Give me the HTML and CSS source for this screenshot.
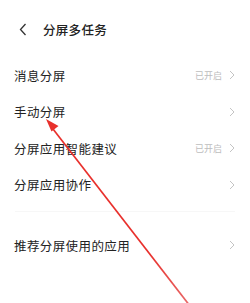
FILE: index.html
```html
<!DOCTYPE html>
<html lang="zh">
<head>
<meta charset="utf-8">
<link rel="stylesheet" href="styles.css">
</head>
<body>
<div class="page">
  <header class="topbar">
    <svg class="back" width="8" height="13" viewBox="0 0 8 13"><path d="M6.5 1 L1.5 6.5 L6.5 12" fill="none" stroke="#333" stroke-width="1.3"/></svg>
    <span class="title">分屏多任务</span>
  </header>
  <div class="list">
    <div class="row"><span class="label">消息分屏</span><span class="right"><span class="status">已开启</span><svg class="chev" width="6" height="10" viewBox="0 0 6 10"><path d="M1 1 L5 5 L1 9" fill="none" stroke="#c4c4c4" stroke-width="1"/></svg></span></div>
    <div class="row"><span class="label">手动分屏</span><span class="right"><svg class="chev" width="6" height="10" viewBox="0 0 6 10"><path d="M1 1 L5 5 L1 9" fill="none" stroke="#c4c4c4" stroke-width="1"/></svg></span></div>
    <div class="row"><span class="label">分屏应用智能建议</span><span class="right"><span class="status">已开启</span><svg class="chev" width="6" height="10" viewBox="0 0 6 10"><path d="M1 1 L5 5 L1 9" fill="none" stroke="#c4c4c4" stroke-width="1"/></svg></span></div>
    <div class="row"><span class="label">分屏应用协作</span><span class="right"><svg class="chev" width="6" height="10" viewBox="0 0 6 10"><path d="M1 1 L5 5 L1 9" fill="none" stroke="#c4c4c4" stroke-width="1"/></svg></span></div>
  </div>
  <div class="divider"></div>
  <div class="list second">
    <div class="row"><span class="label">推荐分屏使用的应用</span><span class="right"><svg class="chev" width="6" height="10" viewBox="0 0 6 10"><path d="M1 1 L5 5 L1 9" fill="none" stroke="#c4c4c4" stroke-width="1"/></svg></span></div>
  </div>
  <svg class="arrow" width="250" height="303" viewBox="0 0 250 303">
    <defs>
      <linearGradient id="fade" x1="0" y1="0" x2="0" y2="1">
        <stop offset="0" stop-color="#e8302c"/>
        <stop offset="0.7" stop-color="#e8302c"/>
        <stop offset="1" stop-color="#e86a6a"/>
      </linearGradient>
    </defs>
    <path d="M53 129 L190 306" stroke="url(#fade)" stroke-width="1.7" fill="none"/>
    <path d="M46 119 L58.5 126 L51.5 131.5 Z" fill="#e8302c"/>
  </svg>
</div>
</body>
</html>
```

FILE: styles.css
```css
html, body {
  margin: 0;
  padding: 0;
  background: #fff;
}
body {
  font-family: "Noto Sans CJK SC", "Noto Sans", sans-serif;
  color: #222;
}
.page {
  position: relative;
  width: 250px;
  height: 303px;
  overflow: hidden;
}
.topbar {
  display: flex;
  align-items: center;
  height: 22px;
  padding: 18px 0 0 19px;
}
.back {
  display: block;
}
.title {
  margin-left: 16px;
  font-size: 12.5px;
  font-weight: 500;
  letter-spacing: 0.3px;
  color: #222;
}
.list {
  display: flex;
  flex-direction: column;
  padding: 0 14px;
  margin-top: 17px;
}
.row {
  display: flex;
  align-items: center;
  justify-content: space-between;
  height: 36.5px;
}
.label {
  font-size: 12.5px;
  letter-spacing: 0.4px;
  color: #222;
}
.right {
  display: flex;
  align-items: center;
  gap: 6px;
}
.status {
  font-size: 9px;
  color: #bdbdbd;
  margin-right: 1px;
}
.chev {
  display: block;
  margin-right: 1px;
}
.divider {
  height: 1px;
  margin: 8px 15px 0;
  background: #f7f7f7;
}
.list.second {
  margin-top: 15px;
}
.arrow {
  position: absolute;
  left: 0;
  top: 0;
  pointer-events: none;
}
```
